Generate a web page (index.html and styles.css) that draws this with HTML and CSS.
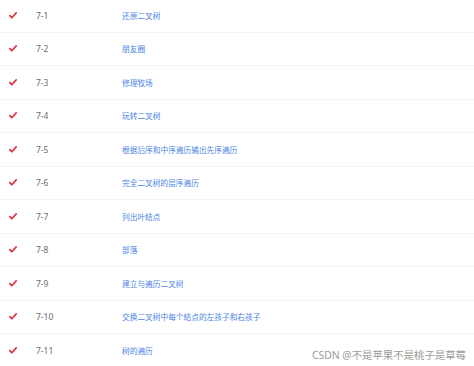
FILE: index.html
```html
<!DOCTYPE html>
<html lang="zh">
<head>
<meta charset="utf-8">
<link rel="stylesheet" href="styles.css">
</head>
<body>
<div class="list">
  <div class="row"><span class="check"><svg viewBox="0 0 8 7" width="8" height="7"><path d="M0.8 3.6 L2.8 5.8 L7.2 0.9" /></svg></span><span class="num">7-1</span><a class="title">还原二叉树</a></div>
  <div class="row"><span class="check"><svg viewBox="0 0 8 7" width="8" height="7"><path d="M0.8 3.6 L2.8 5.8 L7.2 0.9" /></svg></span><span class="num">7-2</span><a class="title">朋友圈</a></div>
  <div class="row"><span class="check"><svg viewBox="0 0 8 7" width="8" height="7"><path d="M0.8 3.6 L2.8 5.8 L7.2 0.9" /></svg></span><span class="num">7-3</span><a class="title">修理牧场</a></div>
  <div class="row"><span class="check"><svg viewBox="0 0 8 7" width="8" height="7"><path d="M0.8 3.6 L2.8 5.8 L7.2 0.9" /></svg></span><span class="num">7-4</span><a class="title">玩转二叉树</a></div>
  <div class="row"><span class="check"><svg viewBox="0 0 8 7" width="8" height="7"><path d="M0.8 3.6 L2.8 5.8 L7.2 0.9" /></svg></span><span class="num">7-5</span><a class="title">根据后序和中序遍历输出先序遍历</a></div>
  <div class="row"><span class="check"><svg viewBox="0 0 8 7" width="8" height="7"><path d="M0.8 3.6 L2.8 5.8 L7.2 0.9" /></svg></span><span class="num">7-6</span><a class="title">完全二叉树的层序遍历</a></div>
  <div class="row"><span class="check"><svg viewBox="0 0 8 7" width="8" height="7"><path d="M0.8 3.6 L2.8 5.8 L7.2 0.9" /></svg></span><span class="num">7-7</span><a class="title">列出叶结点</a></div>
  <div class="row"><span class="check"><svg viewBox="0 0 8 7" width="8" height="7"><path d="M0.8 3.6 L2.8 5.8 L7.2 0.9" /></svg></span><span class="num">7-8</span><a class="title">部落</a></div>
  <div class="row"><span class="check"><svg viewBox="0 0 8 7" width="8" height="7"><path d="M0.8 3.6 L2.8 5.8 L7.2 0.9" /></svg></span><span class="num">7-9</span><a class="title">建立与遍历二叉树</a></div>
  <div class="row"><span class="check"><svg viewBox="0 0 8 7" width="8" height="7"><path d="M0.8 3.6 L2.8 5.8 L7.2 0.9" /></svg></span><span class="num">7-10</span><a class="title">交换二叉树中每个结点的左孩子和右孩子</a></div>
  <div class="row"><span class="check"><svg viewBox="0 0 8 7" width="8" height="7"><path d="M0.8 3.6 L2.8 5.8 L7.2 0.9" /></svg></span><span class="num">7-11</span><a class="title">树的遍历</a></div>
</div>
<div class="watermark">CSDN @不是苹果不是桃子是草莓</div>
</body>
</html>
```
FILE: styles.css
```css
html, body {
  margin: 0;
  padding: 0;
  background: #ffffff;
  width: 474px;
  height: 366px;
  overflow: hidden;
  font-family: "Noto Sans", "Noto Sans CJK SC", sans-serif;
}
.list {
  margin-top: -1px;
}
.row {
  display: flex;
  align-items: center;
  height: 32.5px;
  border-bottom: 1px solid #f4f4f5;
}
.check {
  display: flex;
  width: 8px;
  margin-left: 9px;
}
.check svg {
  fill: none;
  stroke: #e0303c;
  stroke-width: 1.6;
  stroke-linecap: round;
  stroke-linejoin: round;
}
.num {
  margin-left: 19px;
  width: 86px;
  font-size: 8.5px;
  color: #6a6c70;
}
.title {
  font-family: "Noto Sans CJK SC", sans-serif;
  font-size: 7.7px;
  color: #4d84e6;
  text-decoration: none;
}
.watermark {
  position: absolute;
  right: 8px;
  bottom: 4px;
  font-family: "Noto Sans", "Noto Sans CJK SC", sans-serif;
  font-size: 10.4px;
  color: #9a9a9a;
}
```
